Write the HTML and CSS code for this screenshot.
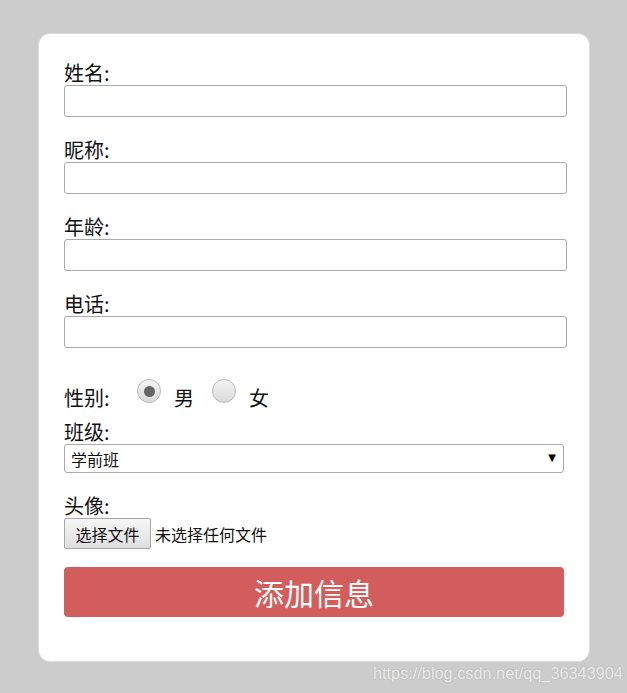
FILE: index.html
```html
<!DOCTYPE html>
<html lang="zh-CN">
<head>
<meta charset="utf-8">
<title>添加信息</title>
<link rel="stylesheet" href="styles.css">
</head>
<body>
<div class="card">
  <div class="field">
    <label class="label" for="name">姓名:</label>
    <input class="text" id="name" type="text">
  </div>
  <div class="field">
    <label class="label" for="nick">昵称:</label>
    <input class="text" id="nick" type="text">
  </div>
  <div class="field">
    <label class="label" for="age">年龄:</label>
    <input class="text" id="age" type="text">
  </div>
  <div class="field">
    <label class="label" for="tel">电话:</label>
    <input class="text" id="tel" type="text">
  </div>
  <div class="gender">
    <span class="gender-label">性别:</span>
    <span class="radio checked"></span>
    <span class="radio-text">男</span>
    <span class="radio"></span>
    <span class="radio-text">女</span>
  </div>
  <div class="field-class">
    <label class="label" for="cls">班级:</label>
    <div class="select-wrap">
      <select class="select" id="cls">
        <option>学前班</option>
        <option>一年级</option>
        <option>二年级</option>
      </select>
      <span class="arrow">▼</span>
    </div>
  </div>
  <div class="field-avatar">
    <span class="label">头像:</span>
    <div class="file-row">
      <button class="file-btn" type="button">选择文件</button>
      <span class="file-text">未选择任何文件</span>
    </div>
  </div>
  <button class="submit" type="button">添加信息</button>
</div>
<div class="watermark">https://blog.csdn.net/qq_36343904</div>
</body>
</html>
```

FILE: styles.css
```css
html, body {
  margin: 0;
  padding: 0;
}
body {
  background: #cccccc;
  width: 627px;
  height: 693px;
  position: relative;
  overflow: hidden;
  font-family: "Noto Sans CJK SC", "Noto Sans", sans-serif;
  color: #111;
}
.card {
  box-sizing: border-box;
  margin: 33px 0 0 38px;
  width: 552px;
  height: 629px;
  background: #ffffff;
  border: 1px solid #dddddd;
  border-radius: 12px;
  padding: 27px 0 0 25px;
}
.field {
  margin-bottom: 21px;
}
.label {
  display: block;
  font-size: 20px;
  line-height: 24px;
  height: 24px;
}
.text {
  display: block;
  box-sizing: border-box;
  width: 503px;
  height: 32px;
  margin: 0;
  border: 1px solid #a9a9a9;
  border-radius: 3px;
  background: #fff;
  padding: 0 4px;
  font-size: 16px;
  outline: none;
}
.gender {
  display: flex;
  align-items: flex-start;
  margin-top: 31px;
  height: 31px;
}
.gender-label {
  width: 73px;
  font-size: 20px;
  line-height: 24px;
  margin-top: 7px;
}
.radio {
  box-sizing: border-box;
  width: 24px;
  height: 24px;
  border-radius: 50%;
  border: 1px solid #b9b9b9;
  background: linear-gradient(#f4f4f4, #d9d9d9);
  display: flex;
  align-items: center;
  justify-content: center;
}
.radio.checked::after {
  content: "";
  width: 11px;
  height: 11px;
  border-radius: 50%;
  background: #666;
}
.radio-text {
  font-size: 20px;
  line-height: 24px;
  margin-top: 7px;
  margin-left: 13px;
  margin-right: 18px;
}
.field-class {
  margin-top: 10px;
}
.select-wrap {
  position: relative;
  width: 500px;
  height: 29px;
}
.select {
  appearance: none;
  -webkit-appearance: none;
  box-sizing: border-box;
  width: 500px;
  height: 29px;
  margin: 0;
  border: 1px solid #a9a9a9;
  border-radius: 3px;
  background: #fff;
  padding: 0 0 0 6px;
  font-family: "Noto Sans CJK SC", sans-serif;
  font-size: 16px;
  color: #111;
  outline: none;
}
.arrow {
  position: absolute;
  right: 8px;
  top: 8px;
  font-size: 10px;
  line-height: 12px;
  color: #000;
  pointer-events: none;
  font-family: "DejaVu Sans", sans-serif;
}
.field-avatar {
  margin-top: 21px;
}
.file-row {
  display: flex;
  align-items: center;
  height: 31px;
}
.file-btn {
  box-sizing: border-box;
  width: 87px;
  height: 31px;
  margin: 0;
  padding: 0;
  border: 1px solid #a6a6a6;
  border-radius: 2px;
  background: linear-gradient(#f7f7f7, #dedede);
  font-family: "Noto Sans CJK SC", sans-serif;
  font-size: 16px;
  color: #111;
}
.file-text {
  margin-left: 4px;
  font-size: 16px;
  line-height: 20px;
}
.submit {
  display: block;
  box-sizing: border-box;
  width: 500px;
  height: 50px;
  margin: 18px 0 0 0;
  border: none;
  border-radius: 4px;
  background: #d35c5c;
  color: #fff;
  font-family: "Noto Sans CJK SC", sans-serif;
  font-size: 30px;
  line-height: 50px;
  padding: 0;
}
.watermark {
  position: absolute;
  left: 373px;
  top: 663px;
  font-family: "Liberation Sans", Arial, sans-serif;
  font-size: 16.3px;
  line-height: 20px;
  color: rgba(255, 255, 255, 0.8);
  text-shadow: 0 0 1px rgba(120, 120, 120, 0.6);
}
```
